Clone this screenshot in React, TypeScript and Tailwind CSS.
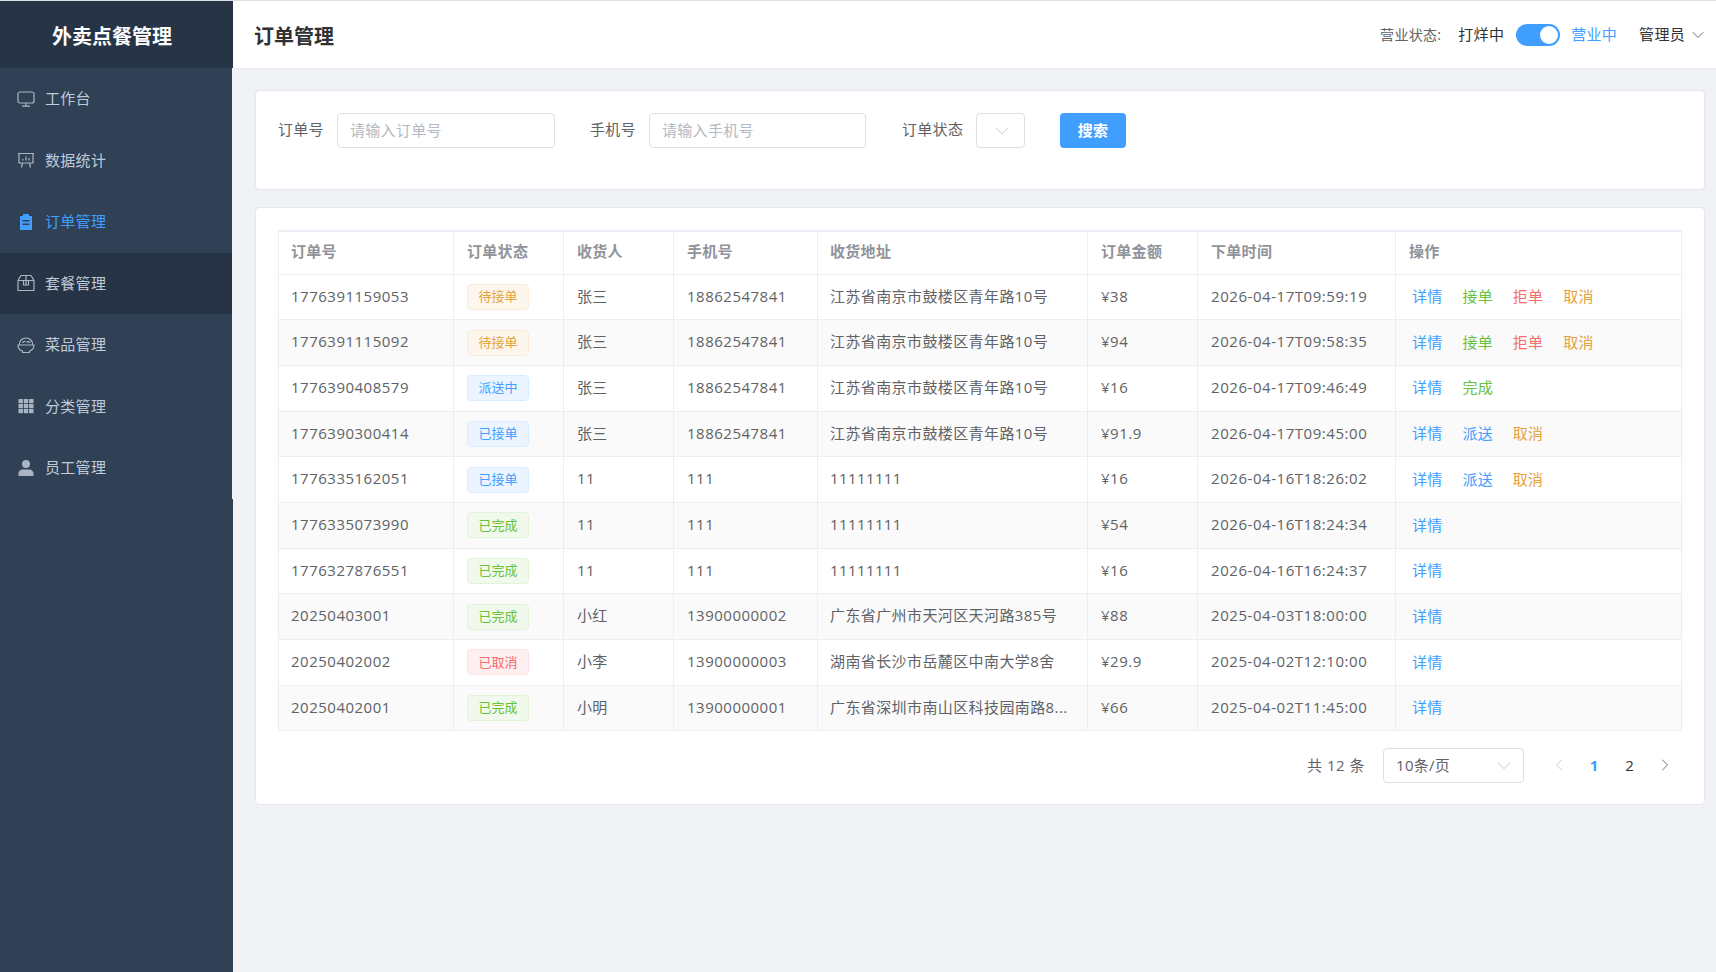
import { ChevronDown, ChevronLeft, ChevronRight } from "lucide-react";

type Order = {
  id: string;
  status: string;
  name: string;
  phone: string;
  address: string;
  amount: string;
  time: string;
  actions: string[];
};

const nanjing = "江苏省南京市鼓楼区青年路10号";

const orders: Order[] = [
  { id: "1776391159053", status: "待接单", name: "张三", phone: "18862547841", address: nanjing, amount: "¥38", time: "2026-04-17T09:59:19", actions: ["详情", "接单", "拒单", "取消"] },
  { id: "1776391115092", status: "待接单", name: "张三", phone: "18862547841", address: nanjing, amount: "¥94", time: "2026-04-17T09:58:35", actions: ["详情", "接单", "拒单", "取消"] },
  { id: "1776390408579", status: "派送中", name: "张三", phone: "18862547841", address: nanjing, amount: "¥16", time: "2026-04-17T09:46:49", actions: ["详情", "完成"] },
  { id: "1776390300414", status: "已接单", name: "张三", phone: "18862547841", address: nanjing, amount: "¥91.9", time: "2026-04-17T09:45:00", actions: ["详情", "派送", "取消"] },
  { id: "1776335162051", status: "已接单", name: "11", phone: "111", address: "11111111", amount: "¥16", time: "2026-04-16T18:26:02", actions: ["详情", "派送", "取消"] },
  { id: "1776335073990", status: "已完成", name: "11", phone: "111", address: "11111111", amount: "¥54", time: "2026-04-16T18:24:34", actions: ["详情"] },
  { id: "1776327876551", status: "已完成", name: "11", phone: "111", address: "11111111", amount: "¥16", time: "2026-04-16T16:24:37", actions: ["详情"] },
  { id: "20250403001", status: "已完成", name: "小红", phone: "13900000002", address: "广东省广州市天河区天河路385号", amount: "¥88", time: "2025-04-03T18:00:00", actions: ["详情"] },
  { id: "20250402002", status: "已取消", name: "小李", phone: "13900000003", address: "湖南省长沙市岳麓区中南大学8舍", amount: "¥29.9", time: "2025-04-02T12:10:00", actions: ["详情"] },
  { id: "20250402001", status: "已完成", name: "小明", phone: "13900000001", address: "广东省深圳市南山区科技园南路8...", amount: "¥66", time: "2025-04-02T11:45:00", actions: ["详情"] },
];

const tagStyles: Record<string, string> = {
  待接单: "bg-[#fdf6ec] border-[#faecd8] text-[#e6a23c]",
  派送中: "bg-[#ecf5ff] border-[#d9ecff] text-[#409eff]",
  已接单: "bg-[#ecf5ff] border-[#d9ecff] text-[#409eff]",
  已完成: "bg-[#f0f9eb] border-[#e1f3d8] text-[#67c23a]",
  已取消: "bg-[#fef0f0] border-[#fde2e2] text-[#f56c6c]",
};

const actionStyles: Record<string, string> = {
  详情: "text-[#409eff]",
  接单: "text-[#67c23a]",
  完成: "text-[#67c23a]",
  拒单: "text-[#f56c6c]",
  派送: "text-[#409eff]",
  取消: "text-[#e6a23c]",
};

const IconMonitor = () => (
  <svg width="18" height="18" viewBox="0 0 18 18" fill="none" stroke="currentColor" strokeWidth="1.2">
    <rect x="1" y="2" width="16" height="11" rx="2" />
    <path d="M9 13v3M5 16.2h8" />
  </svg>
);

const IconBoard = () => (
  <svg width="18" height="18" viewBox="0 0 18 18" fill="none" stroke="currentColor" strokeWidth="1.2">
    <path d="M1 2.5h16M2 2.5v9.5h14V2.5M5.5 12l-1 4.5M12.5 12l1 4.5M6 9.5V8M9 9.5V5.5M12 9.5V7" />
  </svg>
);

const IconClipboard = () => (
  <svg width="18" height="18" viewBox="0 0 18 18" fill="currentColor">
    <path fillRule="evenodd" d="M6 1h6v2h3v14H3V3h3V1zM5.5 7v1.4h7V7h-7zm0 3.5v1.4h7v-1.4h-7z" />
  </svg>
);

const IconBox = () => (
  <svg width="18" height="18" viewBox="0 0 18 18" fill="none" stroke="currentColor" strokeWidth="1.2">
    <path d="M1 6.5 4 1.5h10l3 5v10H1v-10zM1 6.5h16M6.5 6.5V11h5V6.5M9 1.5v9.5" />
  </svg>
);

const IconBowl = () => (
  <svg width="18" height="18" viewBox="0 0 18 18" fill="none" stroke="currentColor" strokeWidth="1.2">
    <path d="M1 9h16c0 3.5-2.5 5.5-4.5 6v1.5h-7V15C3.5 14.5 1 12.5 1 9z" />
    <path d="M2.5 9C2 5 5 2 9 2s7 3 6.5 7M5.5 7c.5-1.5 2-2 3-1.5M9.5 6.5c1-1.5 3-1 3.5.5" />
  </svg>
);

const IconGrid = () => (
  <svg width="18" height="18" viewBox="0 0 18 18" fill="currentColor">
    <rect x="1.5" y="2" width="4.4" height="4.2" />
    <rect x="6.8" y="2" width="4.4" height="4.2" />
    <rect x="12.1" y="2" width="4.4" height="4.2" />
    <rect x="1.5" y="7" width="4.4" height="4.2" />
    <rect x="6.8" y="7" width="4.4" height="4.2" />
    <rect x="12.1" y="7" width="4.4" height="4.2" />
    <rect x="1.5" y="12" width="4.4" height="4.2" />
    <rect x="6.8" y="12" width="4.4" height="4.2" />
    <rect x="12.1" y="12" width="4.4" height="4.2" />
  </svg>
);

const IconUser = () => (
  <svg width="18" height="18" viewBox="0 0 18 18" fill="currentColor">
    <circle cx="9" cy="5" r="4" />
    <path d="M1.5 17v-2.5c0-2.5 2.5-4 4.5-4h6c2 0 4.5 1.5 4.5 4V17h-15z" />
  </svg>
);

const menu = [
  { label: "工作台", icon: <IconMonitor /> },
  { label: "数据统计", icon: <IconBoard /> },
  { label: "订单管理", icon: <IconClipboard />, active: true },
  { label: "套餐管理", icon: <IconBox />, hover: true },
  { label: "菜品管理", icon: <IconBowl /> },
  { label: "分类管理", icon: <IconGrid /> },
  { label: "员工管理", icon: <IconUser /> },
];

const Sidebar = () => (
  <aside className="w-[233px] shrink-0 bg-[#304156] flex flex-col">
    <div className="h-[67px] shrink-0 bg-[#263445] flex items-center justify-center pt-[4px] pr-[9px] text-white text-[20px] font-bold tracking-normal">
      外卖点餐管理
    </div>
    <nav className="border-r border-[#f0f2f5]">
      {menu.map((item) => (
        <div
          key={item.label}
          className={
            "h-[61.5px] flex items-center pl-[17px] gap-[10px] " +
            (item.hover ? "bg-[#263445] " : "") +
            (item.active ? "text-[#409eff]" : "text-[#bfcbd9]")
          }
        >
          <span className={item.active ? "text-[#409eff]" : "text-[#a9b5c3]"}>{item.icon}</span>
          <span className="pb-[1px]">{item.label}</span>
        </div>
      ))}
    </nav>
  </aside>
);

const Header = () => (
  <header className="h-[67px] shrink-0 bg-white flex items-center justify-between pl-[21px] pr-[8px] shadow-[0_1px_2px_rgba(0,0,0,0.04)]">
    <h1 className="pt-[4px] text-[20px] font-bold text-[#303133] tracking-normal">订单管理</h1>
    <div className="flex items-center">
      <span className="text-[14px] text-[#606266] mr-[17px]">营业状态:</span>
      <span className="text-[#303133] mr-[12px]">打烊中</span>
      <div className="w-[44px] h-[22px] rounded-full bg-[#409eff] relative mr-[11px]">
        <div className="absolute right-[2px] top-[2px] w-[18px] h-[18px] rounded-full bg-white" />
      </div>
      <span className="text-[#409eff] mr-[22px]">营业中</span>
      <span className="text-[#303133] mr-[3px]">管理员</span>
      <ChevronDown size={20} strokeWidth={1.1} className="text-[#606266]" />
    </div>
  </header>
);

const inputClass =
  "h-[35px] border border-[#dcdfe6] rounded-[4px] bg-white px-[12px] pb-[2px] text-[15px] tracking-[0.3px] outline-none placeholder:text-[#b4b8c0]";

const FilterCard = () => (
  <section className="h-[100px] bg-white border border-[#e4e7ed] rounded-[4px] pt-[22px] pl-[22px] flex items-start">
    <label className="h-[34px] leading-[33px] w-[59px]">订单号</label>
    <input className={inputClass + " w-[218px]"} placeholder="请输入订单号" />
    <label className="h-[34px] leading-[33px] ml-[35px] w-[59px]">手机号</label>
    <input className={inputClass + " w-[217px]"} placeholder="请输入手机号" />
    <label className="h-[34px] leading-[33px] ml-[36px] w-[74px]">订单状态</label>
    <div className="w-[49px] h-[35px] border border-[#dcdfe6] rounded-[4px] flex items-center justify-center">
      <ChevronDown size={22} strokeWidth={1} className="text-[#c0c4cc] ml-[3px]" />
    </div>
    <button className="ml-[35px] w-[66px] h-[35px] rounded-[4px] bg-[#409eff] text-white font-bold">搜索</button>
  </section>
);

const OrdersTable = () => (
  <table className="w-[1403px] table-fixed border-collapse">
    <colgroup>
      <col className="w-[175px]" />
      <col className="w-[110px]" />
      <col className="w-[110px]" />
      <col className="w-[144px]" />
      <col className="w-[270px]" />
      <col className="w-[110px]" />
      <col className="w-[198px]" />
      <col className="w-[286px]" />
    </colgroup>
    <thead>
      <tr className="h-[43px]">
        {["订单号", "订单状态", "收货人", "手机号", "收货地址", "订单金额", "下单时间", "操作"].map((h, i) => (
          <th
            key={h}
            className={
              "border border-[#ebeef5] border-t-2 pr-[13px] pb-[3px] text-left font-bold text-[#909399] " +
              (i === 0 || i === 4 ? "pl-[12px]" : "pl-[13px]")
            }
          >
            {h}
          </th>
        ))}
      </tr>
    </thead>
    <tbody>
      {orders.map((o, i) => (
        <tr key={o.id} className={"h-[45.7px] " + (i % 2 === 1 ? "bg-[#fafafa]" : "")}>
          <td className="border border-[#ebeef5] pl-[12px] pr-[13px] pb-[2px] tracking-[0.5px]">{o.id}</td>
          <td className="border border-[#ebeef5] px-[13px]">
            <span className={"inline-flex h-[26px] w-[62px] items-center justify-center rounded-[4px] border text-[13px] tracking-normal " + tagStyles[o.status]}>
              {o.status}
            </span>
          </td>
          <td className="border border-[#ebeef5] px-[13px] pb-[2px]">{o.name}</td>
          <td className="border border-[#ebeef5] px-[13px] pb-[2px] tracking-[0.5px]">{o.phone}</td>
          <td className="border border-[#ebeef5] pl-[12px] pr-[13px] pb-[2px] whitespace-nowrap tracking-[0.4px]">{o.address}</td>
          <td className="border border-[#ebeef5] px-[13px] pb-[2px] tracking-[0.5px]">{o.amount}</td>
          <td className="border border-[#ebeef5] px-[13px] pb-[2px] tracking-[0.55px]">{o.time}</td>
          <td className="border border-[#ebeef5] pl-[16px] pr-[13px] pb-[1px]">
            <div className="flex gap-[19.8px]">
              {o.actions.map((a) => (
                <span key={a} className={actionStyles[a]}>
                  {a}
                </span>
              ))}
            </div>
          </td>
        </tr>
      ))}
    </tbody>
  </table>
);

const Pagination = () => (
  <div className="mt-[17px] pr-[1px] flex items-center justify-end h-[35px]">
    <span className="mr-[18px] pb-[2px] tracking-[0.5px]">共 12 条</span>
    <div className="w-[141px] h-[35px] border border-[#dcdfe6] rounded-[4px] flex items-center justify-between pl-[12px] pr-[8px] mr-[17px]">
      <span className="pb-[2px]">10条/页</span>
      <ChevronDown size={22} strokeWidth={1} className="text-[#c0c4cc]" />
    </div>
    <div className="flex items-center pb-[2px]">
      <span className="w-[35.5px] flex justify-center text-[#c0c4cc]">
        <ChevronLeft size={20} strokeWidth={1.1} />
      </span>
      <span className="w-[35.5px] text-center font-bold text-[#409eff]">1</span>
      <span className="w-[35.5px] text-center text-[#303133]">2</span>
      <span className="w-[35.5px] flex justify-center text-[#606266]">
        <ChevronRight size={20} strokeWidth={1.1} />
      </span>
    </div>
  </div>
);

const App = () => {
  return (
    <div className="h-screen overflow-hidden flex flex-col bg-[#f0f2f5] text-[15px] tracking-[0.3px] text-[#606266] font-['Open_Sans','Noto_Sans_CJK_SC',sans-serif]">
      <div className="h-[1px] shrink-0 bg-[#dcdfe6]" />
      <div className="flex flex-1 min-h-0">
        <Sidebar />
        <main className="flex-1 min-w-0 flex flex-col">
          <Header />
          <div className="pt-[22px] pl-[22px] pr-[11px] flex flex-col gap-[17px]">
            <FilterCard />
            <section className="h-[598px] bg-white border border-[#e4e7ed] rounded-[4px] pt-[22px] pl-[22px]">
              <OrdersTable />
              <div className="w-[1406px]">
                <Pagination />
              </div>
            </section>
          </div>
        </main>
      </div>
    </div>
  );
};

export default App;
